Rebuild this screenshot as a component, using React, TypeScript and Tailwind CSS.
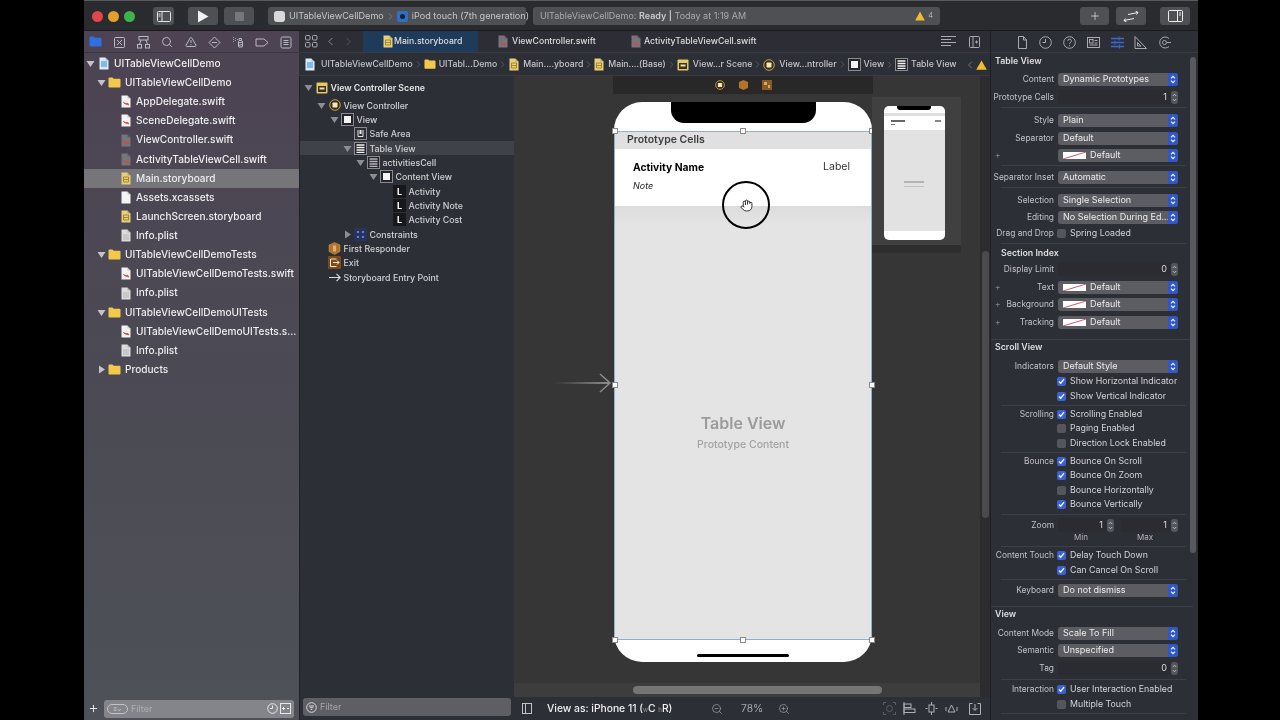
import type { ReactNode } from "react";
import { ChevronLeft, ChevronRight, Hand, Plus, Search, SprayCan, TriangleAlert, ZoomIn, ZoomOut } from "lucide-react";

const ui = "font-['Inter','Liberation_Sans',sans-serif]";

function Disclosure({ open = true, color = "#a6a6ac" }: { open?: boolean; color?: string }) {
  return (
    <svg width="9" height="9" viewBox="0 0 9 9" className="shrink-0">
      {open ? <path d="M0.5 2h8L4.5 8z" fill={color} /> : <path d="M2 0.5v8L8 4.5z" fill={color} />}
    </svg>
  );
}

function FolderIcon({ w = 13, color = "#f2c94c" }: { w?: number; color?: string }) {
  return (
    <svg width={w} height={w * 0.85} viewBox="0 0 13 11" className="shrink-0">
      <path d="M0.5 1.5a1 1 0 0 1 1-1h3l1.2 1.2h6a1 1 0 0 1 .8 1V9.5a1 1 0 0 1-1 1h-10a1 1 0 0 1-1-1z" fill={color} />
    </svg>
  );
}

function DocIcon({ kind }: { kind: "project" | "swift" | "swiftDim" | "story" | "blank" | "plist" }) {
  const fill = { project: "#d9ecfb", swift: "#f4f4f4", swiftDim: "#77757a", story: "#e7cf7c", blank: "#f4f4f4", plist: "#dcdcdc" }[kind];
  return (
    <svg width="10" height="13" viewBox="0 0 10 13" className="shrink-0">
      <path d="M0.5 0.5h6l3 3v9h-9z" fill={fill} />
      <path d="M6.5 0.5v3h3" fill="#00000030" />
      {kind === "project" && <path d="M2 5h6M2 7h6M2 9h6" stroke="#2f86d8" strokeWidth="1.2" />}
      {(kind === "swift" || kind === "swiftDim") && <path d="M2.5 7.5c1.5 1 3 1.5 4.5 1 .4.5.6 1 .6 1.5-1-.7-3.500-.6-5-2.500z" fill="#e0443a" stroke="#e0443a" />}
      {kind === "story" && <path d="M2.500 5h5v5h-5zM2.500 7.500h5" fill="none" stroke="#9c7f20" strokeWidth="0.9" />}
      {kind === "plist" && <path d="M2 6h6M2 8h6M2 10h6" stroke="#9a9a9a" strokeWidth="0.6" />}
    </svg>
  );
}

function NavRow({ indent, arrow, icon, label, selected }: { indent: string; arrow?: "open" | "closed"; icon: ReactNode; label: string; selected?: boolean }) {
  return (
    <div className={`flex h-[19.125px] items-center ${indent} ${selected ? "bg-[#75757a]" : ""}`}>
      <div className="flex w-[10px] shrink-0 items-center">{arrow && <Disclosure open={arrow === "open"} color="#c4c4c8" />}</div>
      <div className="flex w-[15px] shrink-0 items-center justify-center">{icon}</div>
      <span className="ml-[3px] whitespace-nowrap text-[10.1px] font-medium text-[#eeeef0]">{label}</span>
    </div>
  );
}

function Navigator() {
  const rows = [
    { indent: "pl-[2px]", arrow: "open", icon: <DocIcon kind="project" />, label: "UITableViewCellDemo" },
    { indent: "pl-[13px]", arrow: "open", icon: <FolderIcon />, label: "UITableViewCellDemo" },
    { indent: "pl-[24px]", icon: <DocIcon kind="swift" />, label: "AppDelegate.swift" },
    { indent: "pl-[24px]", icon: <DocIcon kind="swift" />, label: "SceneDelegate.swift" },
    { indent: "pl-[24px]", icon: <DocIcon kind="swiftDim" />, label: "ViewController.swift" },
    { indent: "pl-[24px]", icon: <DocIcon kind="swiftDim" />, label: "ActivityTableViewCell.swift" },
    { indent: "pl-[24px]", icon: <DocIcon kind="story" />, label: "Main.storyboard", selected: true },
    { indent: "pl-[24px]", icon: <DocIcon kind="blank" />, label: "Assets.xcassets" },
    { indent: "pl-[24px]", icon: <DocIcon kind="story" />, label: "LaunchScreen.storyboard" },
    { indent: "pl-[24px]", icon: <DocIcon kind="plist" />, label: "Info.plist" },
    { indent: "pl-[13px]", arrow: "open", icon: <FolderIcon />, label: "UITableViewCellDemoTests" },
    { indent: "pl-[24px]", icon: <DocIcon kind="swift" />, label: "UITableViewCellDemoTests.swift" },
    { indent: "pl-[24px]", icon: <DocIcon kind="plist" />, label: "Info.plist" },
    { indent: "pl-[13px]", arrow: "open", icon: <FolderIcon />, label: "UITableViewCellDemoUITests" },
    { indent: "pl-[24px]", icon: <DocIcon kind="swift" />, label: "UITableViewCellDemoUITests.s..." },
    { indent: "pl-[24px]", icon: <DocIcon kind="plist" />, label: "Info.plist" },
    { indent: "pl-[13px]", arrow: "closed", icon: <FolderIcon />, label: "Products" },
  ] as const;
  const stroke = "#b9b9c0";
  return (
    <aside className="flex w-[215px] shrink-0 flex-col bg-gradient-to-b from-[#4d4353] via-[#4b4a54] to-[#4e5158]">
      <div className="flex h-[22px] items-center justify-between border-b border-[#3a3640] pl-[5px] pr-[7px] pt-[1px]">
        <FolderIcon w={13} color="#2f6fe0" />
        <svg width="13" height="13" viewBox="0 0 13 13" fill="none" stroke={stroke}><rect x="1.500" y="1.500" width="10" height="10" rx="1" /><path d="M4 4l5 5M9 4l-5 5" /></svg>
        <svg width="13" height="13" viewBox="0 0 13 13" fill="none" stroke={stroke}><rect x="2" y="0.500" width="9" height="3.500" /><path d="M4 4L2.500 8.500M9 4l1.500 4.500" /><rect x="0.500" y="8.500" width="4" height="3.500" /><rect x="8.500" y="8.500" width="4" height="3.500" /></svg>
        <Search size={12} color={stroke} />
        <TriangleAlert size={12} color={stroke} />
        <svg width="13" height="13" viewBox="0 0 13 13" fill="none" stroke={stroke}><path d="M6.500 1L12 6.500 6.500 12 1 6.500zM4 6.500h5" /></svg>
        <SprayCan size={12} color={stroke} />
        <svg width="14" height="11" viewBox="0 0 14 11" fill="none" stroke={stroke}><path d="M1 2h8l4 3.500L9 9H1z" /></svg>
        <svg width="12" height="13" viewBox="0 0 12 13" fill="none" stroke={stroke}><rect x="1" y="1" width="10" height="11" rx="1.500" /><path d="M3.500 4.500h5M3.500 6.500h5M3.500 8.500h5" /></svg>
      </div>
      <div className="flex-1 overflow-hidden pt-[1px]">
        {rows.map((r, i) => (
          <NavRow key={i} indent={r.indent} arrow={"arrow" in r ? r.arrow : undefined} icon={r.icon} label={r.label} selected={"selected" in r} />
        ))}
      </div>
      <div className="flex h-[23px] items-center pl-[4px] pr-[5px]">
        <Plus size={11} color="#f0f0f0" />
        <div className="ml-[5px] flex h-[18px] flex-1 items-center rounded-[3px] bg-[#84858a] px-[3px]">
          <div className="flex h-[10px] w-[21px] items-center justify-center rounded-full border border-[#c4c4c8] text-[6px] leading-none text-[#d8d8dc]">≡⌄</div>
          <span className="ml-[3px] text-[9px] text-[#aeaeb2]">Filter</span>
          <div className="ml-auto flex items-center gap-[2px]">
            <svg width="11" height="11" viewBox="0 0 11 11" fill="none" stroke="#e8e8ea"><circle cx="5.500" cy="5.500" r="4.800" /><path d="M5.500 2.500v3H3" /></svg>
            <svg width="11" height="11" viewBox="0 0 11 11" fill="none" stroke="#e8e8ea"><rect x="0.500" y="0.500" width="10" height="10" /><path d="M2 5.500h3M3.500 4v3M7 5.500h2" /></svg>
          </div>
        </div>
      </div>
    </aside>
  );
}

function Toolbar() {
  const btn = "flex h-[18px] items-center justify-center rounded-[3px] bg-[#4f5054]";
  return (
    <header className="flex h-[31px] shrink-0 items-center border-t border-b border-t-[#5a5a5c] border-b-[#1b1b1d] bg-[#2a2b2e] pl-[8px] pr-[8px] pt-[1px]">
      <span className="h-[11px] w-[11px] rounded-full bg-[#e0464a]" />
      <span className="ml-[5px] h-[11px] w-[11px] rounded-full bg-[#e0a02c]" />
      <span className="ml-[5px] h-[11px] w-[11px] rounded-full bg-[#3fb24a]" />
      <div className={`${btn} ml-[18px] w-[21px]`}>
        <svg width="14" height="11" viewBox="0 0 14 11" fill="none" stroke="#e4e4e6"><rect x="0.500" y="0.500" width="13" height="10" rx="1" /><path d="M5 0.500v10M1.500 3h2M1.500 5h2" /></svg>
      </div>
      <div className={`${btn} ml-[14px] w-[30px]`}>
        <svg width="12" height="13" viewBox="0 0 12 13"><path d="M1 0.500v12l10.500-6z" fill="#f2f2f2" /></svg>
      </div>
      <div className={`${btn} ml-[6px] w-[30px]`}>
        <span className="h-[9px] w-[9px] rounded-[1px] bg-[#76777b]" />
      </div>
      <div className={`${btn} ml-[14px] w-[258px] justify-start pl-[6px] text-[9.1px] text-[#c6c6c8]`}>
        <span className="h-[11px] w-[11px] shrink-0 rounded-[3px] bg-[#d9d9dc]" />
        <span className="ml-[4px] whitespace-nowrap">UITableViewCellDemo</span>
        <ChevronRight size={11} strokeWidth={1} color="#a6a6a8" className="mx-[1px] shrink-0" />
        <span className="flex h-[11px] w-[11px] shrink-0 items-center justify-center rounded-[2px] bg-[#2f6fc8]"><span className="h-[5px] w-[5px] rounded-full bg-[#16222e]" /></span>
        <span className="ml-[4px] whitespace-nowrap">iPod touch (7th generation)</span>
      </div>
      <div className={`${btn} ml-[7px] w-[407px] justify-start pl-[7px] pr-[7px] text-[9px] text-[#a9aaac]`}>
        <span className="whitespace-nowrap">UITableViewCellDemo: <b className="font-semibold text-[#c9c9cb]">Ready</b> <b className="font-semibold text-[#c9c9cb]">|</b> Today at 1:19 AM</span>
        <svg width="10" height="10" viewBox="0 0 10 10" className="ml-auto"><path d="M5 0.500L9.800 9.500H0.200z" fill="#f0bc2e" /></svg>
        <span className="ml-[3px] text-[7.500px]">4</span>
      </div>
      <div className={`${btn} ml-[140px] w-[29px]`}><Plus size={12} strokeWidth={1.3} color="#f0f0f0" /></div>
      <div className={`${btn} ml-[7px] w-[30px]`}>
        <svg width="16" height="11" viewBox="0 0 16 11" fill="none" stroke="#f0f0f0"><path d="M5 3.500L15 1.500M12.500 0l2.500 1.500-1.500 2M11 7.500L1 9.500M3.500 11L1 9.500l1.500-2" /></svg>
      </div>
      <div className={`${btn} ml-[14px] w-[30px]`}>
        <svg width="15" height="12" viewBox="0 0 15 12" fill="none" stroke="#f0f0f0"><rect x="0.500" y="0.500" width="14" height="11" rx="1" /><path d="M9.500 0.500v11M11 3h2M11 5h2" /></svg>
      </div>
    </header>
  );
}

function TabBar() {
  return (
    <div className="flex h-[22px] shrink-0 items-center border-b border-[#3a3b42] bg-[#2d2e35] text-[8.7px] font-medium text-[#dcdcde]">
      <svg width="13" height="13" viewBox="0 0 13 13" fill="none" stroke="#a9a9af" className="ml-[6px]"><rect x="0.500" y="0.500" width="4.500" height="4.500" rx="1" /><rect x="7.500" y="0.500" width="4.500" height="4.500" rx="1" /><rect x="0.500" y="7.500" width="4.500" height="4.500" rx="1" /><rect x="7.500" y="7.500" width="4.500" height="4.500" rx="1" /></svg>
      <ChevronLeft size={13} strokeWidth={1.3} color="#b2b2b8" className="ml-[6px]" />
      <ChevronRight size={13} strokeWidth={1.3} color="#6a6a70" className="ml-[5px]" />
      <div className="ml-[8px] flex h-full w-[115px] items-center bg-[#1f3b5a] pl-[20px]">
        <DocIcon kind="story" />
        <span className="ml-[1px] whitespace-nowrap">Main.storyboard</span>
      </div>
      <div className="ml-[20px]"><DocIcon kind="swiftDim" /></div>
      <span className="ml-[4px] w-[119px] whitespace-nowrap">ViewController.swift</span>
      <DocIcon kind="swiftDim" />
      <span className="ml-[3px] whitespace-nowrap">ActivityTableViewCell.swift</span>
      <svg width="15" height="11" viewBox="0 0 15 11" stroke="#a9a9af" className="ml-auto"><path d="M0 0.500h15M0 3.500h10M0 6.500h15M0 9.500h10" /></svg>
      <svg width="11" height="12" viewBox="0 0 11 12" fill="none" stroke="#a9a9af" className="ml-[13px] mr-[10px]"><rect x="0.500" y="0.500" width="10" height="11" rx="1" /><path d="M4 0.500v11M6 6h3M7.500 4.500v3" /></svg>
    </div>
  );
}

function JumpChevron() {
  return <ChevronRight size={11} strokeWidth={1} color="#88888c" className="shrink-0" />;
}

function JumpBar() {
  return (
    <div className="flex h-[23px] shrink-0 items-center whitespace-nowrap border-b border-[#3a3b42] bg-[#2d2f37] pl-[6px] pt-[1px] text-[8.7px] font-medium text-[#c6c6ca]">
      <DocIcon kind="project" />
      <span className="ml-[6px]">UITableViewCellDemo</span>
      <JumpChevron />
      <FolderIcon w={12} />
      <span className="ml-[3px]">UITabl...Demo</span>
      <JumpChevron />
      <div className="ml-[1px]"><DocIcon kind="story" /></div>
      <span className="ml-[4px]">Main....yboard</span>
      <JumpChevron />
      <DocIcon kind="story" />
      <span className="ml-[4px]">Main....(Base)</span>
      <JumpChevron />
      <BoxIcon kind="scene" />
      <span className="ml-[4px]">View...r Scene</span>
      <JumpChevron />
      <VcIcon />
      <span className="ml-[4px]">View...ntroller</span>
      <JumpChevron />
      <BoxIcon kind="view" />
      <span className="ml-[3px]">View</span>
      <JumpChevron />
      <BoxIcon kind="table" />
      <span className="ml-[3px]">Table View</span>
      <ChevronLeft size={12} strokeWidth={1.200} color="#a0a0a4" className="ml-[7px] shrink-0" />
      <svg width="11" height="10" viewBox="0 0 11 10" className="shrink-0"><path d="M5.500 0.500L10.800 9.800H0.200z" fill="#f0bc2e" /></svg>
      <ChevronRight size={12} strokeWidth={1.200} color="#a0a0a4" className="shrink-0" />
    </div>
  );
}

function VcIcon({ size = 12 }: { size?: number }) {
  return (
    <svg width={size} height={size} viewBox="0 0 12 12" className="shrink-0">
      <circle cx="6" cy="6" r="5.300" fill="#3a3020" stroke="#c9a13a" />
      <rect x="3.500" y="3.500" width="5" height="5" rx="0.800" fill="#f6e9c0" />
    </svg>
  );
}

function BoxIcon({ kind }: { kind: "scene" | "view" | "safe" | "table" | "cell" | "label" | "constraints" | "responder" | "exit" | "entry" }) {
  if (kind === "scene") {
    return (
      <svg width="12" height="12" viewBox="0 0 12 12" className="shrink-0"><rect x="0.500" y="0.500" width="11" height="11" rx="1" fill="#e7c860" /><rect x="2" y="4" width="8" height="6" fill="#3a3226" /><rect x="3.500" y="5.500" width="5" height="2" fill="#f0e0a0" /></svg>
    );
  }
  if (kind === "view") return <svg width="13" height="13" viewBox="0 0 13 13" className="shrink-0"><rect x="0.500" y="0.500" width="12" height="12" fill="#24252b" stroke="#8a8a90" /><rect x="3" y="3" width="7" height="7" fill="#f4f4f4" /></svg>;
  if (kind === "safe") return <svg width="13" height="13" viewBox="0 0 13 13" fill="none"><rect x="0.500" y="0.500" width="12" height="12" stroke="#8a8a90" /><path d="M4 3v6.500h5V3" stroke="#e8e8e8" /><rect x="5.500" y="3" width="2" height="4" fill="#e8e8e8" /></svg>;
  if (kind === "table" || kind === "cell") {
    const c = kind === "table" ? "#f2f2f2" : "#b4b4b8";
    return <svg width="13" height="13" viewBox="0 0 13 13" className="shrink-0"><rect x="0.500" y="0.500" width="12" height="12" fill="#24252b" stroke="#8a8a90" /><path d="M2.500 3h8M2.500 5.500h8M2.500 8h8M2.500 10.300h8" stroke={c} strokeWidth="1.300" /></svg>;
  }
  if (kind === "label") return <div className={`flex h-[13px] w-[13px] items-center justify-center bg-[#17181c] text-[9px] font-bold leading-none text-white ${ui}`}>L</div>;
  if (kind === "constraints") return <svg width="13" height="13" viewBox="0 0 13 13"><rect width="13" height="13" rx="1" fill="#26345e" /><path d="M3 3h2v2H3zM8 3h2v2H8zM3 8h2v2H3zM8 8h2v2H8z" fill="#5e7fd8" /></svg>;
  if (kind === "responder") return <svg width="13" height="13" viewBox="0 0 13 13"><path d="M6.500 0.500l5.500 2.500v6.500l-5.500 3-5.500-3V3z" fill="#b4722c" stroke="#d8984a" strokeWidth="0.500" /><rect x="5" y="3.500" width="3" height="6" fill="#e0b070" /></svg>;
  if (kind === "exit") return <svg width="13" height="13" viewBox="0 0 13 13" fill="none"><rect width="13" height="13" rx="1" fill="#7c4a1c" /><path d="M8.500 3h-6v7.500h6" stroke="#f6e9d0" /><path d="M5 6.500h6M9 4.500l2 2-2 2" stroke="#f6e9d0" /></svg>;
  return <svg width="12" height="9" viewBox="0 0 12 9" fill="none" stroke="#dcdcde" strokeWidth="1.100"><path d="M0 4.500h11M7.500 0.800l3.700 3.700-3.700 3.700" /></svg>;
}

function OutlineRow({ indent, arrow, icon, label, strong, selected, height = "h-[14.350px]" }: { indent: string; arrow?: "open" | "closed"; icon: ReactNode; label: string; strong?: boolean; selected?: boolean; height?: string }) {
  return (
    <div className={`flex items-center ${height} ${indent} ${selected ? "bg-[#404249]" : ""}`}>
      <div className="flex w-[9px] shrink-0 items-center">{arrow && <Disclosure open={arrow === "open"} color="#8d8e94" />}</div>
      <div className="ml-[2px] flex w-[13px] shrink-0 items-center justify-center">{icon}</div>
      <span className={`ml-[2.500px] whitespace-nowrap text-[8.800px] ${strong ? "font-semibold text-[#e4e4e6]" : "font-medium text-[#d0d0d2]"}`}>{label}</span>
    </div>
  );
}

function Outline() {
  return (
    <div className="flex w-[215px] shrink-0 flex-col border-l border-[#1f2025] bg-[#2d2f37]">
      <div className="flex-1 pt-[4px]">
        <OutlineRow indent="pl-[4px]" arrow="open" icon={<BoxIcon kind="scene" />} label="View Controller Scene" strong height="h-[15px]" />
        <div className="h-[3px]" />
        <OutlineRow indent="pl-[17px]" arrow="open" icon={<VcIcon />} label="View Controller" />
        <OutlineRow indent="pl-[30px]" arrow="open" icon={<BoxIcon kind="view" />} label="View" />
        <OutlineRow indent="pl-[43px]" icon={<BoxIcon kind="safe" />} label="Safe Area" />
        <OutlineRow indent="pl-[43px]" arrow="open" icon={<BoxIcon kind="table" />} label="Table View" selected />
        <OutlineRow indent="pl-[56px]" arrow="open" icon={<BoxIcon kind="cell" />} label="activitiesCell" />
        <OutlineRow indent="pl-[69px]" arrow="open" icon={<BoxIcon kind="view" />} label="Content View" />
        <OutlineRow indent="pl-[82px]" icon={<BoxIcon kind="label" />} label="Activity" />
        <OutlineRow indent="pl-[82px]" icon={<BoxIcon kind="label" />} label="Activity Note" />
        <OutlineRow indent="pl-[82px]" icon={<BoxIcon kind="label" />} label="Activity Cost" />
        <OutlineRow indent="pl-[43px]" arrow="closed" icon={<BoxIcon kind="constraints" />} label="Constraints" />
        <OutlineRow indent="pl-[17px]" icon={<BoxIcon kind="responder" />} label="First Responder" />
        <OutlineRow indent="pl-[17px]" icon={<BoxIcon kind="exit" />} label="Exit" />
        <OutlineRow indent="pl-[17px]" icon={<BoxIcon kind="entry" />} label="Storyboard Entry Point" />
      </div>
      <div className="flex h-[23px] items-start px-[3px] pt-[1px]">
        <div className="flex h-[18px] w-full items-center rounded-[3px] bg-[#5e5f65] pl-[3px]">
          <svg width="11" height="11" viewBox="0 0 11 11" fill="none" stroke="#d8d8dc"><circle cx="5.500" cy="5.500" r="4.800" /><path d="M3 4h5M3.800 5.700h3.400M4.800 7.400h1.400" /></svg>
          <span className="ml-[3px] text-[9px] text-[#a6a6aa]">Filter</span>
        </div>
      </div>
    </div>
  );
}

function Handle({ className }: { className: string }) {
  return <span className={`absolute h-[6px] w-[6px] border border-[#8a8a8a] bg-white ${className}`} />;
}

function Canvas() {
  return (
    <div className="relative flex-1 overflow-hidden bg-[#363636]">
      {/* scene dock */}
      <div className="absolute left-[99px] top-0 flex h-[18px] w-[260px] items-center justify-center gap-[14px] bg-[#282828]">
        <VcIcon size={10} />
        <svg width="9" height="10" viewBox="0 0 9 10"><path d="M4.500 0L9 2v6L4.500 10 0 8V2z" fill="#b4722c" /></svg>
        <svg width="10" height="10" viewBox="0 0 10 10"><rect width="10" height="10" fill="#8a5a24" /><path d="M2 2h3v3H2zM6 5h2v3H6z" fill="#d8a860" /></svg>
      </div>
      {/* entry arrow */}
      <div className="absolute left-[41px] top-[306px] h-[2px] w-[54px] bg-gradient-to-r from-[#36363600] to-[#8c8c8c]" />
      <svg width="14" height="20" viewBox="0 0 14 20" fill="none" stroke="#8c8c8c" strokeWidth="1.500" className="absolute left-[84px] top-[297px]"><path d="M2 1l10 9-10 9" /></svg>
      {/* phone */}
      <div className="absolute left-[100px] top-[26px] h-[560px] w-[258px] overflow-hidden rounded-[28px] bg-white">
        <div className="absolute left-[57px] top-0 h-[21px] w-[145px] rounded-b-[13px] bg-black" />
        <div className={`absolute inset-x-0 top-[29px] h-[509px] border border-[#8eb0cc] bg-[#e4e4e4] ${ui}`}>
          <div className="flex h-[17px] items-center bg-[#e0e0e0] pb-[2px] pl-[12px] text-[10.500px] font-semibold text-[#3c3c3c]">Prototype Cells</div>
          <div className="h-[57px] bg-white pl-[18px] pr-[21px]">
            <div className="flex pt-[11px] text-[10.300px] leading-[14px] text-black">
              <span className="font-bold">Activity Name</span>
              <span className="ml-auto text-[10.500px] text-[#333]">Label</span>
            </div>
            <div className="pt-[6px] text-[9px] italic leading-[12px] text-[#222]">Note</div>
          </div>
          <div className="h-[18px] bg-gradient-to-b from-[#dcdcdc] to-[#e4e4e4]" />
          <div className="pt-[189px] text-center text-[16px] font-semibold leading-[20px] text-[#9b9b9b]">Table View</div>
          <div className="pt-[5px] text-center text-[10.500px] font-medium leading-[14px] text-[#a2a2a2]">Prototype Content</div>
        </div>
        <div className="absolute bottom-[5px] left-[83px] h-[3px] w-[92px] rounded-full bg-black" />
      </div>
      <Handle className="left-[98px] top-[52px]" />
      <Handle className="left-[226px] top-[52px]" />
      <Handle className="left-[355px] top-[52px]" />
      <Handle className="left-[98px] top-[306px]" />
      <Handle className="left-[355px] top-[306px]" />
      <Handle className="left-[98px] top-[561px]" />
      <Handle className="left-[226px] top-[561px]" />
      <Handle className="left-[355px] top-[561px]" />
      {/* touch pointer */}
      <div className="absolute left-[208px] top-[105px] flex h-[48px] w-[48px] items-center justify-center rounded-full border-[2px] border-black">
        <Hand size={13} strokeWidth={1.600} color="#111" fill="#fff" />
      </div>
      {/* minimap */}
      <div className="absolute left-[358px] top-[21px] h-[156px] w-[89px] border-b-[8px] border-[#2e2e2e] bg-[#404040]">
        <div className="relative ml-[12px] mt-[9px] h-[134px] w-[61px] overflow-hidden rounded-[5px] bg-white">
          <div className="absolute left-[13px] top-0 h-[4px] w-[34px] rounded-b-[3px] bg-black" />
          <div className="absolute inset-x-0 top-[7px] h-[3px] bg-[#dedede]" />
          <div className="absolute left-[7px] top-[14px] h-[2px] w-[14px] bg-[#666]" />
          <div className="absolute right-[4px] top-[14px] h-[2px] w-[6px] bg-[#888]" />
          <div className="absolute left-[7px] top-[18px] h-[1px] w-[4px] bg-[#777]" />
          <div className="absolute inset-x-0 top-[24px] h-[101px] bg-[#e2e2e2]" />
          <div className="absolute left-[20px] top-[75px] h-[2px] w-[20px] bg-[#b4b4b4]" />
          <div className="absolute left-[20px] top-[80px] h-[1px] w-[20px] bg-[#c2c2c2]" />
        </div>
      </div>
    </div>
  );
}

function BottomBar() {
  const c = "#9a9ba0";
  return (
    <div className={`flex h-[23px] shrink-0 items-center bg-[#2d2f37] pl-[8px] pr-[9px] text-[10.300px] ${ui}`}>
      <svg width="10" height="11" viewBox="0 0 10 11" fill="none" stroke="#c2c2c6"><rect x="0.500" y="0.500" width="9" height="10" /><path d="M3.500 0.500v10" /></svg>
      <span className="ml-[15px] w-[164px] whitespace-nowrap font-medium text-[#f0f0f2]">View as: iPhone 11 (<span className="text-[6px] text-[#888]">w</span>C <span className="text-[6px] text-[#888]">h</span>R)</span>
      <ZoomOut size={12} strokeWidth={1.500} color={c} />
      <span className="ml-[18px] w-[36px] text-[#a8a8ac]">78%</span>
      <ZoomIn size={12} strokeWidth={1.500} color={c} className="ml-[1px]" />
      <svg width="13" height="13" viewBox="0 0 13 13" fill="none" stroke="#5c5d63" className="ml-auto"><path d="M0.500 3v-2.500H3M10 0.500h2.500V3M0.500 10v2.500H3M10 12.500h2.500V10" /><circle cx="6.500" cy="6.500" r="3" /></svg>
      <svg width="13" height="13" viewBox="0 0 13 13" fill="none" stroke="#b0b0b4" className="ml-[7px]"><path d="M1 0v13" /><rect x="1" y="2" width="7" height="3.500" /><rect x="1" y="7" width="11" height="3.500" /></svg>
      <svg width="13" height="13" viewBox="0 0 13 13" fill="none" stroke="#b0b0b4" className="ml-[9px]"><rect x="4" y="3" width="5" height="7" /><path d="M6.500 0v3M6.500 10v3M0.500 6.500h2M10.500 6.500h2" /></svg>
      <svg width="13" height="13" viewBox="0 0 13 13" fill="none" stroke="#b0b0b4" className="ml-[7px]"><path d="M6.500 3L10 10H3zM1 5v4M12 5v4" /></svg>
      <svg width="12" height="12" viewBox="0 0 12 12" fill="none" stroke="#b0b0b4" className="ml-[11px]"><path d="M3.500 0.500H0.500v11h11v-11H8.500M6 1v6M3.500 5L6 7.500 8.500 5" /></svg>
    </div>
  );
}

function Chevrons() {
  return (
    <svg width="6" height="9" viewBox="0 0 6 9" fill="none" stroke="#fff" strokeWidth="1.100"><path d="M1 3.300L3 1.300l2 2M1 5.700l2 2 2-2" /></svg>
  );
}

function Swatch() {
  return (
    <svg width="23" height="7" viewBox="0 0 23 7" className="shrink-0">
      <rect width="23" height="7" fill="#fff" />
      <path d="M0 7L23 0" stroke="#c8303a" strokeWidth="0.800" />
    </svg>
  );
}

function Popup({ value, swatch }: { value: string; swatch?: boolean }) {
  return (
    <div className="flex h-[13px] w-[120px] items-center overflow-hidden rounded-[3px] bg-[#5c5d62]">
      <div className="flex flex-1 items-center gap-[4px] overflow-hidden whitespace-nowrap pl-[5px] text-[#ececee]">
        {swatch && <Swatch />}
        <span>{value}</span>
      </div>
      <div className="flex h-full w-[10px] items-center justify-center bg-[#2f57c9]"><Chevrons /></div>
    </div>
  );
}

function Stepper() {
  return (
    <div className="flex h-[13px] w-[7px] shrink-0 items-center justify-center rounded-[3px] bg-[#55565b]">
      <svg width="5" height="9" viewBox="0 0 5 9" fill="none" stroke="#c4c4c8" strokeWidth="0.900"><path d="M0.800 3L2.500 1.200 4.200 3M0.800 6l1.700 1.800L4.200 6" /></svg>
    </div>
  );
}

function NumberField({ value, width }: { value: string; width: string }) {
  return (
    <div className={`flex h-[14px] items-center ${width}`}>
      <div className="flex h-full flex-1 items-center justify-end bg-[#2a2c32] pr-[3px] text-[#dcdcde]">{value}</div>
      <div className="ml-[1px]"><Stepper /></div>
    </div>
  );
}

function Row({ label, plus, className = "", children }: { label?: string; plus?: boolean; className?: string; children?: ReactNode }) {
  return (
    <div className={`flex h-[14px] items-center ${className}`}>
      <div className="flex w-[63px] shrink-0 items-center justify-end whitespace-nowrap text-[8.400px] text-[#c2c2c6]">
        {plus && <span className="mr-auto pl-[4px] text-[#85868c]">+</span>}
        {label}
      </div>
      <div className="ml-[4px] flex items-center">{children}</div>
    </div>
  );
}

function Check({ label, on, className = "", rowLabel }: { label: string; on?: boolean; className?: string; rowLabel?: string }) {
  return (
    <Row label={rowLabel} className={className}>
      <span className={`-ml-[1px] flex h-[9px] w-[9px] items-center justify-center rounded-[2px] ${on ? "bg-[#3a62d6]" : "bg-[#55565b]"}`}>
        {on && <svg width="7" height="7" viewBox="0 0 7 7" fill="none" stroke="#fff" strokeWidth="1.300"><path d="M1 3.500l1.700 1.800L6 1.200" /></svg>}
      </span>
      <span className="ml-[4px] whitespace-nowrap text-[8.800px] text-[#d4d4d8]">{label}</span>
    </Row>
  );
}

function Divider({ className = "", wide }: { className?: string; wide?: boolean }) {
  return <div className={`h-[1px] bg-[#3e4047] ${wide ? "mr-[5px]" : "ml-[10px] mr-[12px]"} ${className}`} />;
}

function Heading({ label, className = "" }: { label: string; className?: string }) {
  return <div className={`flex h-[14px] items-center font-semibold text-[8.800px] text-[#dedee0] ${className}`}>{label}</div>;
}

function Inspector() {
  const c = "#a9a9af";
  return (
    <aside className="relative flex w-[208px] shrink-0 flex-col border-l border-[#1f2025] bg-[#2d2f37]">
      <div className="flex h-[22px] shrink-0 items-center gap-[10.800px] border-b border-[#3a3b42] pl-[24.500px] pt-[1px]">
        <svg width="13" height="13" viewBox="0 0 13 13" fill="none" stroke={c}><path d="M2.500 0.500h5l3 3.500v8.500h-8zM7.500 0.500v3.500h3" /></svg>
        <svg width="13" height="13" viewBox="0 0 13 13" fill="none" stroke={c}><circle cx="6.500" cy="6.500" r="5.800" /><path d="M6.500 3v3.500H3.500" /></svg>
        <svg width="13" height="13" viewBox="0 0 13 13" fill="none" stroke={c}><circle cx="6.500" cy="6.500" r="5.800" /><path d="M4.800 5a1.800 1.800 0 1 1 2.700 1.500c-.7.400-1 .800-1 1.500M6.500 9.300v1" /></svg>
        <svg width="13" height="11" viewBox="0 0 13 11" fill="none" stroke={c}><rect x="0.500" y="0.500" width="12" height="10" /><rect x="2.500" y="2.500" width="3.500" height="3.500" /><path d="M7.500 3.500h3M7.500 6h3M2.500 8h8" /></svg>
        <svg width="13" height="13" viewBox="0 0 13 13" fill="none" stroke="#3d67c9"><path d="M0 2.500h13M0 6.500h13M0 10.500h13" strokeWidth="1.300" /><path d="M8 0.500v4M4 4.500v4M8.500 8.500v4" /></svg>
        <svg width="13" height="13" viewBox="0 0 13 13" fill="none" stroke={c}><path d="M1 0.500v12h11.500zM3.500 6.500v3.500h3.500z" /></svg>
        <svg width="13" height="13" viewBox="0 0 13 13" fill="none" stroke={c}><path d="M11 2.500a5.500 5.500 0 1 0 0 8" /><circle cx="6.500" cy="6.500" r="2" /><path d="M8.500 6.500h4.500" /></svg>
      </div>
      <div className={`flex-1 overflow-hidden text-[9px] ${ui}`}>
        <Heading label="Table View" className="mt-[1px] pl-[4px]" />
        <Row label="Content" className="mt-1"><Popup value="Dynamic Prototypes" /></Row>
        <Row label="Prototype Cells" className="mt-1"><NumberField value="1" width="w-[120px]" /></Row>
        <Divider className="mt-[3px]" />
        <Row label="Style" className="mt-[5px]"><Popup value="Plain" /></Row>
        <Row label="Separator" className="mt-1"><Popup value="Default" /></Row>
        <Row plus className="mt-[3px]"><Popup value="Default" swatch /></Row>
        <Divider className="mt-[3px]" />
        <Row label="Separator Inset" className="mt-1"><Popup value="Automatic" /></Row>
        <Divider className="mt-[3px]" />
        <Row label="Selection" className="mt-[5px]"><Popup value="Single Selection" /></Row>
        <Row label="Editing" className="mt-[3px]"><Popup value="No Selection During Ed..." /></Row>
        <Check rowLabel="Drag and Drop" label="Spring Loaded" className="mt-0.5" />
        <Divider className="mt-[3px]" />
        <Heading label="Section Index" className="mt-0.5 pl-[10px]" />
        <Row label="Display Limit" className="mt-0.5"><NumberField value="0" width="w-[120px]" /></Row>
        <Row label="Text" plus className="mt-1"><Popup value="Default" swatch /></Row>
        <Row label="Background" plus className="mt-[3px]"><Popup value="Default" swatch /></Row>
        <Row label="Tracking" plus className="mt-1"><Popup value="Default" swatch /></Row>
        <Divider wide className="mt-[10px]" />
        <Heading label="Scroll View" className="pl-[4px]" />
        <Row label="Indicators" className="mt-[5px]"><Popup value="Default Style" /></Row>
        <Check on label="Show Horizontal Indicator" className="mt-[1px]" />
        <Check on label="Show Vertical Indicator" className="mt-[1px]" />
        <Divider className="mt-0.5" />
        <Check on rowLabel="Scrolling" label="Scrolling Enabled" className="mt-[1px]" />
        <Check label="Paging Enabled" />
        <Check label="Direction Lock Enabled" className="mt-[1px]" />
        <Divider className="mt-0.5" />
        <Check on rowLabel="Bounce" label="Bounce On Scroll" className="mt-[1px]" />
        <Check on label="Bounce On Zoom" />
        <Check label="Bounce Horizontally" className="mt-[1px]" />
        <Check on label="Bounce Vertically" />
        <Divider className="mt-[3px]" />
        <Row label="Zoom" className="mt-[3px]">
          <NumberField value="1" width="w-[56px]" />
          <div className="ml-[7px]"><NumberField value="1" width="w-[57px]" /></div>
        </Row>
        <div className="flex h-[9px] items-center pl-[58px] text-[8px] leading-none text-[#b4b4b8]">
          <span className="w-[64px] text-center">Min</span>
          <span className="w-[64px] text-center">Max</span>
        </div>
        <Divider className="mt-[5px]" />
        <Check on rowLabel="Content Touch" label="Delay Touch Down" className="mt-[1px]" />
        <Check on label="Can Cancel On Scroll" className="mt-[1px]" />
        <Divider className="mt-0.5" />
        <Row label="Keyboard" className="mt-[3px]"><Popup value="Do not dismiss" /></Row>
        <Divider wide className="mt-[9px]" />
        <Heading label="View" className="pl-[4px]" />
        <Row label="Content Mode" className="mt-[5px]"><Popup value="Scale To Fill" /></Row>
        <Row label="Semantic" className="mt-[3px]"><Popup value="Unspecified" /></Row>
        <Row label="Tag" className="mt-1"><NumberField value="0" width="w-[120px]" /></Row>
        <Divider className="mt-1" />
        <Check on rowLabel="Interaction" label="User Interaction Enabled" className="mt-0.5" />
        <Check label="Multiple Touch" className="mt-[1px]" />
        <Divider className="mt-0.5" />
      </div>
      <div className="absolute right-[2px] top-[26px] h-[496px] w-[6px] rounded-full bg-[#58595e]" />
    </aside>
  );
}

export default function App() {
  return (
    <div className={`flex h-[720px] w-[1280px] overflow-hidden bg-black pl-[84px] blur-[0.4px] ${ui}`}>
      <div className="flex w-[1114px] flex-col">
        <Toolbar />
        <div className="flex min-h-0 flex-1">
          <Navigator />
          <div className="flex w-[691px] shrink-0 flex-col">
            <TabBar />
            <JumpBar />
            <div className="flex min-h-0 flex-1">
              <Outline />
              <div className="flex w-[476px] shrink-0 flex-col">
                <div className="flex min-h-0 flex-1">
                  <div className="flex min-w-0 flex-1 flex-col">
                    <Canvas />
                    <div className="flex h-[14px] shrink-0 items-center bg-[#3d3d3e] pl-[119px]">
                      <div className="h-[8px] w-[249px] rounded-full bg-[#757575]" />
                    </div>
                  </div>
                  <div className="flex w-[10px] shrink-0 justify-center bg-[#2c2c2e] pt-[175px]">
                    <div className="h-[267px] w-[7px] rounded-full bg-[#4a4a4c]" />
                  </div>
                </div>
                <BottomBar />
              </div>
            </div>
          </div>
          <Inspector />
        </div>
      </div>
    </div>
  );
}
